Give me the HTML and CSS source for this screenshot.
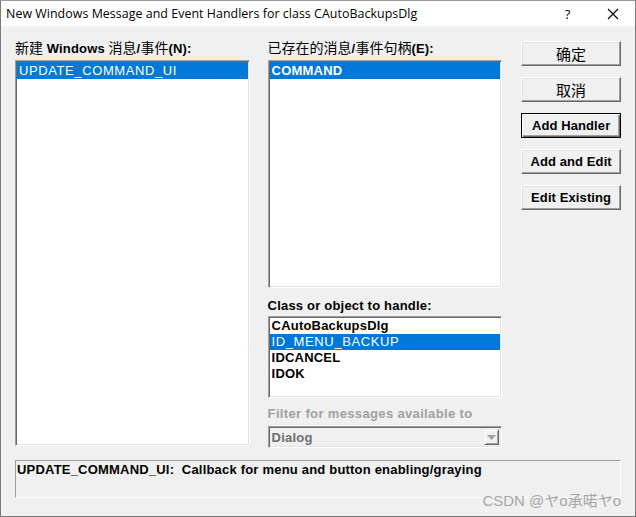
FILE: index.html
```html
<!DOCTYPE html>
<html>
<head>
<meta charset="utf-8">
<link rel="stylesheet" href="styles.css">
</head>
<body>
<div class="window">
  <div class="titlebar">
    <div class="title">New Windows Message and Event Handlers for class CAutoBackupsDlg</div>
    <div class="tbtn help">?</div>
    <div class="tbtn close">
      <svg width="12" height="12" viewBox="0 0 12 12"><path d="M1 1L11 11M11 1L1 11" stroke="#000" stroke-width="1.1" fill="none"/></svg>
    </div>
  </div>
  <div class="client">
    <div class="main">
      <div class="col">
        <div class="label head"><span class="cjk">新建</span> <b>Windows</b> <span class="cjk">消息</span><b>/</b><span class="cjk">事件</span><b>(N):</b></div>
        <div class="listbox tall">
          <div class="row sel reg">UPDATE_COMMAND_UI</div>
        </div>
      </div>
      <div class="col">
        <div class="label head"><span class="cjk">已存在的消息</span><b>/</b><span class="cjk">事件句柄</span><b>(E):</b></div>
        <div class="listbox handlers">
          <div class="row sel">COMMAND</div>
        </div>
        <div class="label sub">Class or object to handle:</div>
        <div class="listbox classes">
          <div class="row">CAutoBackupsDlg</div>
          <div class="row sel reg">ID_MENU_BACKUP</div>
          <div class="row">IDCANCEL</div>
          <div class="row">IDOK</div>
        </div>
        <div class="label sub disabled">Filter for messages available to</div>
        <div class="combo">
          <span class="combo-text">Dialog</span>
          <span class="combo-btn"><svg width="9" height="5" viewBox="0 0 9 5"><path d="M0 0H9L4.5 5Z" fill="#a0a0a0"/></svg></span>
        </div>
      </div>
      <div class="buttons">
        <div class="btn cjkbtn">确定</div>
        <div class="btn cjkbtn">取消</div>
        <div class="btn default">Add Handler</div>
        <div class="btn">Add and Edit</div>
        <div class="btn">Edit Existing</div>
      </div>
    </div>
    <div class="status">UPDATE_COMMAND_UI:&nbsp; Callback for menu and button enabling/graying</div>
  </div>
  <div class="watermark">CSDN @ヤo承喏ヤo</div>
</div>
</body>
</html>
```
FILE: styles.css
```css
* { box-sizing: border-box; }
html, body { margin: 0; padding: 0; background: #f0f0f0; }
body { width: 636px; height: 517px; overflow: hidden; }

.window {
  position: relative;
  width: 636px;
  height: 517px;
  background: #f0f0f0;
  border: 1px solid #7a7a7a;
  border-top-color: #9a9a9a;
  font-family: "Liberation Sans", Arial, sans-serif;
  color: #000;
}

.titlebar {
  height: 25px;
  background: #fff;
  display: flex;
  align-items: center;
}
.title {
  flex: 1;
  padding-left: 5px;
  font-family: "Open Sans", "Noto Sans", sans-serif;
  font-size: 12.4px;
  letter-spacing: 0.05px;
  white-space: nowrap;
}
.tbtn {
  width: 45px;
  height: 25px;
  display: flex;
  align-items: center;
  justify-content: center;
}
.help {
  font-family: "Open Sans", sans-serif;
  font-size: 13px;
}

.client {
  padding: 14px 14px 0 14px;
  display: flex;
  flex-direction: column;
}
.main {
  display: flex;
  height: 408px;
}
.col {
  width: 235px;
  display: flex;
  flex-direction: column;
  margin-right: 17px;
}
.col + .col { margin-left: 1px; margin-right: 19px; }

.label {
  height: 20px;
  line-height: 20px;
  font-size: 13px;
  white-space: nowrap;
}
.label.head {
  line-height: 15px;
}
.label b { font-weight: bold; letter-spacing: 0.2px; }
.cjk {
  font-family: "Noto Sans CJK SC", sans-serif;
  font-size: 14px;
  font-weight: normal;
  line-height: 15px;
}
.sub {
  font-weight: bold;
  letter-spacing: 0.2px;
  margin-top: 8px;
}
.disabled {
  color: #a0a0a0;
  margin-top: 6px;
  letter-spacing: 0.35px;
}

.listbox {
  background: #fff;
  border: 1px solid;
  border-color: #a0a0a0 #fff #fff #a0a0a0;
  box-shadow: inset 1px 1px 0 #696969, inset -1px -1px 0 #e3e3e3;
  padding: 1px;
}
.tall { height: 386px; }
.handlers { height: 228px; }
.classes { height: 82px; }

.row {
  height: 16px;
  line-height: 16px;
  padding-left: 2px;
  font-size: 13px;
  font-weight: bold;
  letter-spacing: 0.2px;
  white-space: nowrap;
}
.row.reg { font-weight: normal; letter-spacing: 0.6px; }
.row.sel {
  background: #0078d7;
  color: #fff;
}
.tall .row, .handlers .row { height: 17px; line-height: 17px; }

.combo {
  margin-top: 2px;
  height: 22px;
  border: 1px solid;
  border-color: #a0a0a0 #fff #fff #a0a0a0;
  box-shadow: inset 1px 1px 0 #696969, inset -1px -1px 0 #e3e3e3;
  background: #f0f0f0;
  display: flex;
  align-items: center;
  padding: 2px;
}
.combo-text {
  flex: 1;
  color: #6d6d6d;
  font-size: 13px;
  font-weight: bold;
  padding-left: 1px;
  letter-spacing: 0.2px;
}
.combo-btn {
  width: 15px;
  height: 16px;
  border: 1px solid;
  border-color: #f0f0f0 #696969 #696969 #f0f0f0;
  box-shadow: inset 1px 1px 0 #fff, inset -1px -1px 0 #a0a0a0;
  display: flex;
  align-items: center;
  justify-content: center;
}

.buttons {
  width: 100px;
  padding-top: 1px;
  display: flex;
  flex-direction: column;
  gap: 11px;
}
.btn {
  height: 25px;
  border: 1px solid;
  border-color: #fff #696969 #696969 #fff;
  box-shadow: inset -1px -1px 0 #a0a0a0, inset 1px 1px 0 #e3e3e3;
  display: flex;
  align-items: center;
  justify-content: center;
  font-size: 13px;
  font-weight: bold;
  letter-spacing: 0.1px;
  white-space: nowrap;
}
.cjkbtn {
  font-family: "Noto Sans CJK SC", sans-serif;
  font-weight: normal;
  font-size: 15px;
}
.btn.default {
  border: 1px solid #000;
  box-shadow: inset 1px 1px 0 #fff, inset -1px -1px 0 #696969, inset -2px -2px 0 #a0a0a0;
}

.status {
  margin-top: 12px;
  height: 38px;
  border: 1px solid;
  border-color: #a0a0a0 #fff #fff #a0a0a0;
  padding: 1px 1px;
  font-size: 13px;
  font-weight: bold;
  letter-spacing: 0.2px;
  white-space: nowrap;
}

.watermark {
  position: absolute;
  right: 14px;
  top: 488px;
  font-family: "Liberation Sans", "Noto Sans CJK JP", sans-serif;
  font-size: 15px;
  color: #a6a6a6;
  white-space: nowrap;
}
```
